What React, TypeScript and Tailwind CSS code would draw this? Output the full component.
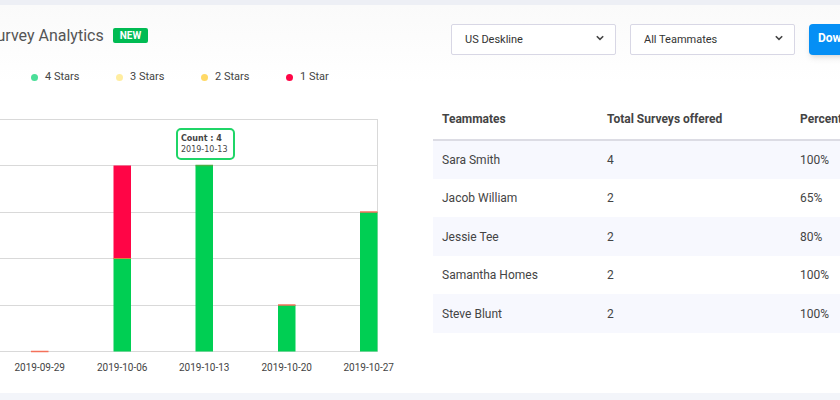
import type { ReactElement, ReactNode } from "react";

interface Week {
  readonly date: string;
  readonly x: number;
  readonly fiveStar: number;
  readonly oneStar: number;
}

interface Teammate {
  readonly name: string;
  readonly offered: number;
  readonly percentage: string;
}

const LEGEND = [
  { label: "4 Stars", dot: "bg-[#4ade98]" },
  { label: "3 Stars", dot: "bg-[#ffeda0]" },
  { label: "2 Stars", dot: "bg-[#ffd966]" },
  { label: "1 Star", dot: "bg-[#ff0546]" },
];

const WEEKS: Week[] = [
  { date: "2019-09-29", x: 31, fiveStar: 0, oneStar: 0 },
  { date: "2019-10-06", x: 113.5, fiveStar: 2, oneStar: 2 },
  { date: "2019-10-13", x: 195.5, fiveStar: 4, oneStar: 0 },
  { date: "2019-10-20", x: 278, fiveStar: 1, oneStar: 0 },
  { date: "2019-10-27", x: 360, fiveStar: 3, oneStar: 0 },
];

const TEAMMATES: Teammate[] = [
  { name: "Sara Smith", offered: 4, percentage: "100%" },
  { name: "Jacob William", offered: 2, percentage: "65%" },
  { name: "Jessie Tee", offered: 2, percentage: "80%" },
  { name: "Samantha Homes", offered: 2, percentage: "100%" },
  { name: "Steve Blunt", offered: 2, percentage: "100%" },
];

const BASELINE = 232.5;
const UNIT = 46.5;
const BAR_WIDTH = 17.5;

function FilterSelect({ label, children }: { readonly label: string; readonly children: ReactNode }): ReactElement {
  return (
    <div className="relative w-[165px] shrink-0">
      <select
        aria-label={label}
        className="block h-[31px] w-full appearance-none rounded-[2px] border border-[#d8d7e5] bg-white pl-[13px] pr-8 pt-px text-[11px] text-[#333] outline-none"
      >
        {children}
      </select>
      <svg
        className="pointer-events-none absolute right-3 top-[11px] h-[6px] w-2"
        viewBox="0 0 8 6"
        fill="none"
        stroke="#444"
        strokeWidth="1.6"
        aria-hidden="true"
      >
        <path d="M0.8 1.2 4 4.3 7.2 1.2" />
      </svg>
    </div>
  );
}

function SurveyChart(): ReactElement {
  return (
    <div className="relative w-[400px] shrink-0">
      <svg className="block h-[262px] w-full" viewBox="0 0 400 262" role="img" aria-label="Survey ratings per week">
        {[0, 1, 2, 3, 4, 5].map((n) => {
          const y = Math.floor(BASELINE - n * UNIT) + 0.5;
          return <line key={n} x1="0" x2="378" y1={y} y2={y} stroke="#d9d9d9" />;
        })}
        <line x1="377.5" x2="377.5" y1="0.5" y2={BASELINE} stroke="#d9d9d9" />
        {WEEKS.map((week) => {
          const top = BASELINE - week.fiveStar * UNIT;
          return (
            <g key={week.date}>
              <rect x={week.x} y={top} width={BAR_WIDTH} height={week.fiveStar * UNIT} fill="#00cf53" />
              <rect
                x={week.x}
                y={top - week.oneStar * UNIT}
                width={BAR_WIDTH}
                height={week.oneStar * UNIT}
                fill="#ff0546"
              />
              <line
                x1={week.x}
                x2={week.x + BAR_WIDTH}
                y1={top}
                y2={top}
                stroke={week.fiveStar === 4 ? "#4aae45" : week.oneStar > 0 ? "#d58a3c" : "#f4715a"}
                strokeWidth={week.oneStar > 0 ? 1 : 1.5}
              />
              <text
                x={week.x + BAR_WIDTH / 2}
                y="252"
                textAnchor="middle"
                className="fill-[#444] text-[10px]"
              >
                {week.date}
              </text>
            </g>
          );
        })}
      </svg>
      {/* Tooltip for the highlighted week */}
      <div className="absolute left-[176px] top-[9px] h-[32px] w-[59px] whitespace-nowrap rounded-[5px] border-2 border-[#1fd567] bg-white pl-[3px] pt-[3px] font-['DejaVu_Sans',sans-serif] text-[8px] leading-[11px] text-[#444]">
        <div className="font-bold">Count : 4</div>
        <div>2019-10-13</div>
      </div>
    </div>
  );
}

function TeammatesTable(): ReactElement {
  return (
    <div className="ml-[33px] min-w-0 flex-1 overflow-hidden">
      <table className="w-full min-w-[470px] table-fixed border-collapse text-left text-xs text-[#444]">
        <thead>
          <tr className="h-[41px] border-b-2 border-[#dcdce4]">
            <th className="w-[165px] pl-[9px] font-bold">Teammates</th>
            <th className="w-[193px] pl-[9px] font-bold">Total Surveys offered</th>
            <th className="pl-[9px] font-bold">Percentage</th>
          </tr>
        </thead>
        <tbody>
          {TEAMMATES.map((mate) => (
            <tr key={mate.name} className="odd:h-[39px] odd:bg-[#f7f8fe] even:h-[38px]">
              <td className="pl-[9px]">{mate.name}</td>
              <td className="pl-[9px]">{mate.offered}</td>
              <td className="pl-[9px]">{mate.percentage}</td>
            </tr>
          ))}
        </tbody>
      </table>
    </div>
  );
}

export default function App(): ReactElement {
  return (
    <main className="min-h-screen overflow-hidden bg-[#f3f5fa] font-[Roboto,sans-serif]">
      <div className="h-[5px] bg-[#edeff5]" />
      <section className="bg-linear-to-b from-[#fafafa] to-white to-20% pb-3">
        <header className="flex pt-[19px]">
          <div className="-ml-[13px] flex h-[23px] w-[464px] shrink-0 items-center">
            <h1 className="w-[117px] whitespace-nowrap text-base text-[#555]">Survey Analytics</h1>
            <span className="ml-[9px] h-[15px] w-[35px] rounded-[2px] bg-[#00bb53] text-center text-[10px] leading-[15px] font-bold text-white">
              NEW
            </span>
          </div>
          <div className="flex gap-[14px]">
            <FilterSelect label="Deskline">
              <option>US Deskline</option>
            </FilterSelect>
            <FilterSelect label="Teammates">
              <option>All Teammates</option>
            </FilterSelect>
            <button
              type="button"
              className="h-[31px] w-[100px] shrink-0 rounded-[4px] bg-[#058ff5] pb-1 pl-[9px] text-left text-xs font-bold text-white shadow-md"
            >
              Download
            </button>
          </div>
        </header>
        <ul className="flex pl-[31px] pt-[13px]">
          {LEGEND.map((item) => (
            <li key={item.label} className="flex w-[85px] items-center gap-[7px] text-[11px] leading-[18px] text-[#444]">
              <span className={`size-[7px] rounded-full ${item.dot}`} />
              {item.label}
            </li>
          ))}
        </ul>
        <div className="flex items-start pt-[13px]">
          <div className="pt-5">
            <SurveyChart />
          </div>
          <TeammatesTable />
        </div>
      </section>
    </main>
  );
}
